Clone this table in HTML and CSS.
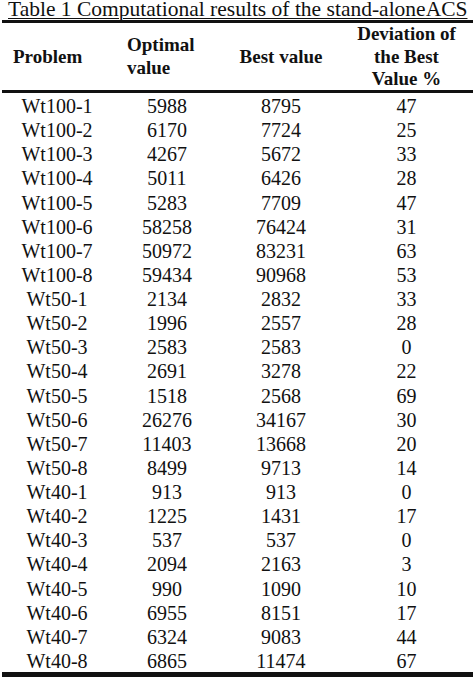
FILE: index.html
```html
<!DOCTYPE html>
<html>
<head>
<meta charset="utf-8">
<link rel="stylesheet" href="styles.css">
</head>
<body>
<div class="page">
  <div class="caption"><span class="caption-text">Table 1 Computational results of the stand-aloneACS</span></div>
  <div class="table">
    <div class="head">
      <div class="h h1">Problem</div>
      <div class="h h2">Optimal<br>value</div>
      <div class="h h3">Best value</div>
      <div class="h h4">Deviation of<br>the Best<br>Value %</div>
    </div>
    <div class="body">
      <div class="row"><span>Wt100-1</span><span>5988</span><span>8795</span><span>47</span></div>
      <div class="row"><span>Wt100-2</span><span>6170</span><span>7724</span><span>25</span></div>
      <div class="row"><span>Wt100-3</span><span>4267</span><span>5672</span><span>33</span></div>
      <div class="row"><span>Wt100-4</span><span>5011</span><span>6426</span><span>28</span></div>
      <div class="row"><span>Wt100-5</span><span>5283</span><span>7709</span><span>47</span></div>
      <div class="row"><span>Wt100-6</span><span>58258</span><span>76424</span><span>31</span></div>
      <div class="row"><span>Wt100-7</span><span>50972</span><span>83231</span><span>63</span></div>
      <div class="row"><span>Wt100-8</span><span>59434</span><span>90968</span><span>53</span></div>
      <div class="row"><span>Wt50-1</span><span>2134</span><span>2832</span><span>33</span></div>
      <div class="row"><span>Wt50-2</span><span>1996</span><span>2557</span><span>28</span></div>
      <div class="row"><span>Wt50-3</span><span>2583</span><span>2583</span><span>0</span></div>
      <div class="row"><span>Wt50-4</span><span>2691</span><span>3278</span><span>22</span></div>
      <div class="row"><span>Wt50-5</span><span>1518</span><span>2568</span><span>69</span></div>
      <div class="row"><span>Wt50-6</span><span>26276</span><span>34167</span><span>30</span></div>
      <div class="row"><span>Wt50-7</span><span>11403</span><span>13668</span><span>20</span></div>
      <div class="row"><span>Wt50-8</span><span>8499</span><span>9713</span><span>14</span></div>
      <div class="row"><span>Wt40-1</span><span>913</span><span>913</span><span>0</span></div>
      <div class="row"><span>Wt40-2</span><span>1225</span><span>1431</span><span>17</span></div>
      <div class="row"><span>Wt40-3</span><span>537</span><span>537</span><span>0</span></div>
      <div class="row"><span>Wt40-4</span><span>2094</span><span>2163</span><span>3</span></div>
      <div class="row"><span>Wt40-5</span><span>990</span><span>1090</span><span>10</span></div>
      <div class="row"><span>Wt40-6</span><span>6955</span><span>8151</span><span>17</span></div>
      <div class="row"><span>Wt40-7</span><span>6324</span><span>9083</span><span>44</span></div>
      <div class="row"><span>Wt40-8</span><span>6865</span><span>11474</span><span>67</span></div>
    </div>
  </div>
</div>
</body>
</html>
```
FILE: styles.css
```css
html, body {
  margin: 0;
  padding: 0;
  background: #ffffff;
}
.page {
  width: 474px;
  height: 677px;
  overflow: hidden;
  font-family: "Liberation Serif", "Times New Roman", serif;
  color: #111111;
}
.caption {
  height: 20px;
  padding-left: 8px;
  font-size: 21.5px;
  line-height: 18px;
  white-space: nowrap;
}
.caption-text {
  text-decoration: underline;
  text-decoration-thickness: 1px;
  text-underline-offset: 2px;
}
.table {
  margin-left: 2px;
  width: 471px;
  border-top: 3px solid #111111;
  border-bottom: 5px solid #111111;
}
.head {
  display: grid;
  grid-template-columns: 110px 110px 118px 133px;
  height: 67px;
  align-items: center;
  border-bottom: 3px solid #111111;
  font-weight: bold;
  font-size: 19px;
  line-height: 22.5px;
}
.h1 { padding-left: 11px; }
.h2 { padding-left: 15px; }
.h3 { text-align: center; }
.h4 { text-align: center; }
.row {
  display: grid;
  grid-template-columns: 110px 110px 118px 133px;
  padding-top: 3px;
  height: 21.125px;
  font-size: 20px;
  line-height: 21.125px;
  text-align: center;
}
```
